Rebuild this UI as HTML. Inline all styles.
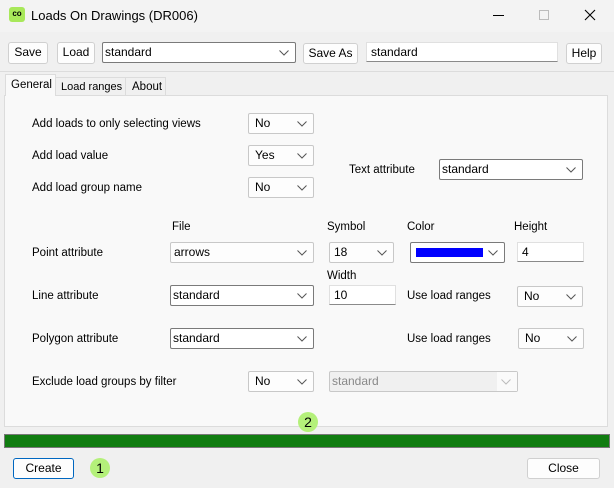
<!DOCTYPE html>
<html><head><style>
*{box-sizing:border-box;margin:0;padding:0}
body{width:614px;height:488px;background:#f0f0f0;font-family:"Liberation Sans",sans-serif;font-size:11.5px;color:#000;position:relative;overflow:hidden}
.a{position:absolute}
.t{position:absolute;line-height:14px;white-space:nowrap}
.btn{position:absolute;background:#fdfdfd;border:1px solid #d0d0d0;border-radius:3px;text-align:center;font-size:12px;line-height:19px}
.cb{position:absolute;background:#fdfdfd;border:1px solid #c8c8c8;border-radius:2px;height:21px;padding-left:6px;line-height:19px;font-size:12px}
.cb.d{border-color:#7a7a7a;background:#fff;padding-left:2px}
.cb svg{position:absolute;right:6px;top:7px}
.in{position:absolute;background:#fff;border:1px solid #e0e0e0;border-bottom:1px solid #8a8a8a;height:20px;padding-left:4px;line-height:18px;font-size:12px}
.badge{position:absolute;width:20px;height:20px;border-radius:50%;background:#b4f07a;text-align:center;line-height:20px;font-size:14px}
</style></head><body>
<div class="a" style="left:0;top:0;width:614px;height:32px;background:#f3f3f3"></div>
<div class="a" style="left:9px;top:7px;width:16px;height:15px;background:#a8e85a;border-radius:3px;font-size:8px;font-weight:bold;text-align:center;line-height:13px">co</div>
<div class="t" style="left:31px;top:9px;font-size:13px">Loads On Drawings (DR006)</div>
<div class="a" style="left:493px;top:15px;width:11px;height:1px;background:#000"></div>
<div class="a" style="left:539px;top:10px;width:10px;height:10px;border:1px solid #bbb"></div>
<svg class="a" style="left:584px;top:9px" width="12" height="12"><path d="M1 1L11 11M11 1L1 11" stroke="#000" stroke-width="1.1"/></svg>
<div class="a" style="left:0;top:71px;width:614px;height:1px;background:#dcdcdc"></div>

<div class="btn" style="left:8px;top:42px;width:40px;height:22px">Save</div>
<div class="btn" style="left:57px;top:42px;width:38px;height:22px">Load</div>
<div class="cb d" style="left:102px;top:42px;width:194px">standard<svg width="10" height="6"><path d="M0.5 0.5L5 5L9.5 0.5" stroke="#555" fill="none"/></svg></div>
<div class="btn" style="left:303px;top:43px;width:55px;height:21px">Save As</div>
<div class="in" style="left:366px;top:42px;width:192px">standard</div>
<div class="btn" style="left:566px;top:43px;width:36px;height:21px">Help</div>

<div class="a" style="left:4px;top:95px;width:604px;height:332px;background:#f9f9f9;border:1px solid #dcdcdc"></div>
<div class="a" style="left:5px;top:74px;width:51px;height:22px;background:#f9f9f9;border:1px solid #dcdcdc;border-bottom:none"></div>
<div class="t" style="left:11px;top:78px;font-size:11.5px">General</div>
<div class="a" style="left:56px;top:77px;width:70px;height:19px;border:1px solid #dcdcdc;border-bottom:none;border-left:none"></div>
<div class="t" style="left:61px;top:80px;font-size:11px">Load ranges</div>
<div class="a" style="left:126px;top:77px;width:40px;height:19px;border:1px solid #dcdcdc;border-bottom:none;border-left:none"></div>
<div class="t" style="left:132px;top:80px;font-size:11.5px">About</div>

<div class="t" style="left:32px;top:117px">Add loads to only selecting views</div>
<div class="cb" style="left:248px;top:113px;width:66px">No<svg width="10" height="6"><path d="M0.5 0.5L5 5L9.5 0.5" stroke="#555" fill="none"/></svg></div>
<div class="t" style="left:32px;top:149px">Add load value</div>
<div class="cb" style="left:248px;top:145px;width:66px">Yes<svg width="10" height="6"><path d="M0.5 0.5L5 5L9.5 0.5" stroke="#555" fill="none"/></svg></div>
<div class="t" style="left:32px;top:181px">Add load group name</div>
<div class="cb" style="left:248px;top:177px;width:66px">No<svg width="10" height="6"><path d="M0.5 0.5L5 5L9.5 0.5" stroke="#555" fill="none"/></svg></div>
<div class="t" style="left:349px;top:163px">Text attribute</div>
<div class="cb d" style="left:439px;top:159px;width:144px">standard<svg width="10" height="6"><path d="M0.5 0.5L5 5L9.5 0.5" stroke="#555" fill="none"/></svg></div>

<div class="t" style="left:172px;top:220px">File</div>
<div class="t" style="left:327px;top:220px">Symbol</div>
<div class="t" style="left:407px;top:220px">Color</div>
<div class="t" style="left:514px;top:220px">Height</div>

<div class="t" style="left:32px;top:246px">Point attribute</div>
<div class="cb" style="left:170px;top:242px;width:144px;padding-left:3px">arrows<svg width="10" height="6"><path d="M0.5 0.5L5 5L9.5 0.5" stroke="#555" fill="none"/></svg></div>
<div class="cb" style="left:329px;top:242px;width:65px;padding-left:4px">18<svg width="10" height="6"><path d="M0.5 0.5L5 5L9.5 0.5" stroke="#555" fill="none"/></svg></div>
<div class="cb d" style="left:410px;top:242px;width:95px"><div class="a" style="left:5px;top:5px;width:67px;height:9px;background:#0000ff"></div><svg width="10" height="6"><path d="M0.5 0.5L5 5L9.5 0.5" stroke="#555" fill="none"/></svg></div>
<div class="in" style="left:517px;top:242px;width:67px">4</div>

<div class="t" style="left:327px;top:269px">Width</div>
<div class="t" style="left:32px;top:289px">Line attribute</div>
<div class="cb d" style="left:170px;top:285px;width:144px">standard<svg width="10" height="6"><path d="M0.5 0.5L5 5L9.5 0.5" stroke="#555" fill="none"/></svg></div>
<div class="in" style="left:329px;top:285px;width:67px">10</div>
<div class="t" style="left:407px;top:289px">Use load ranges</div>
<div class="cb" style="left:517px;top:286px;width:66px">No<svg width="10" height="6"><path d="M0.5 0.5L5 5L9.5 0.5" stroke="#555" fill="none"/></svg></div>

<div class="t" style="left:32px;top:332px">Polygon attribute</div>
<div class="cb d" style="left:170px;top:328px;width:144px">standard<svg width="10" height="6"><path d="M0.5 0.5L5 5L9.5 0.5" stroke="#555" fill="none"/></svg></div>
<div class="t" style="left:407px;top:332px">Use load ranges</div>
<div class="cb" style="left:518px;top:328px;width:66px">No<svg width="10" height="6"><path d="M0.5 0.5L5 5L9.5 0.5" stroke="#555" fill="none"/></svg></div>

<div class="t" style="left:32px;top:375px">Exclude load groups by filter</div>
<div class="cb" style="left:248px;top:371px;width:66px">No<svg width="10" height="6"><path d="M0.5 0.5L5 5L9.5 0.5" stroke="#555" fill="none"/></svg></div>
<div class="cb" style="left:329px;top:371px;width:189px;background:#f0f0f0;color:#888;padding-left:2px"><div class="a" style="right:0;top:0;width:20px;height:19px;background:#fafafa"></div>standard<svg width="10" height="6"><path d="M0.5 0.5L5 5L9.5 0.5" stroke="#bbb" fill="none"/></svg></div>

<div class="badge" style="left:298px;top:412px">2</div>
<div class="a" style="left:4px;top:434px;width:606px;height:14px;border:1px solid #777;background:#107c10"></div>

<div class="btn" style="left:13px;top:458px;width:61px;height:21px;border-color:#0067c0">Create</div>
<div class="badge" style="left:90px;top:458px">1</div>
<div class="btn" style="left:527px;top:458px;width:73px;height:21px">Close</div>
</body></html>
